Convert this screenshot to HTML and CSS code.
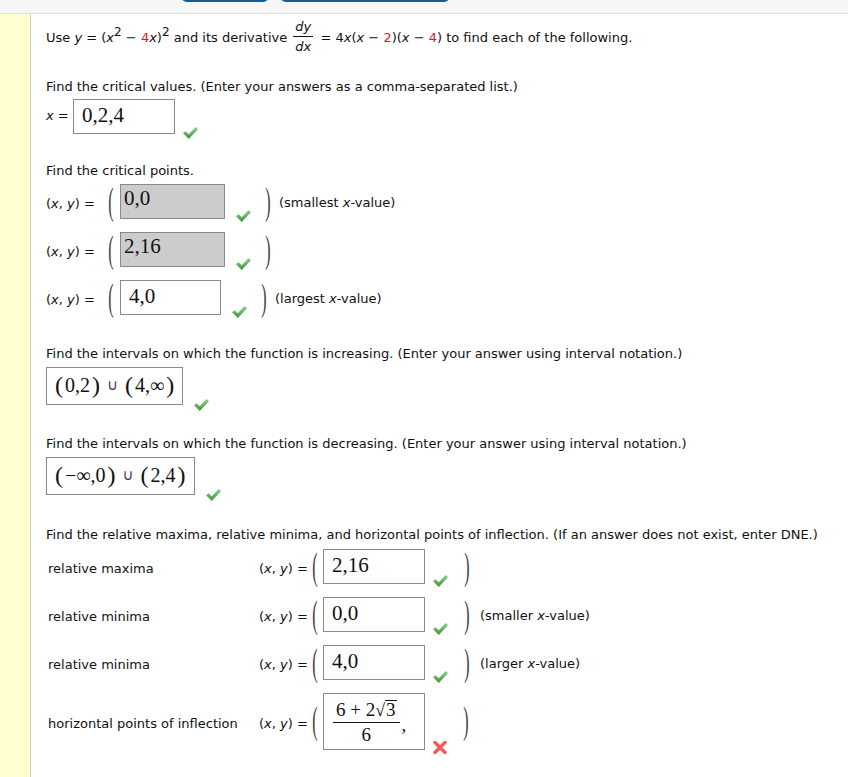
FILE: index.html
```html
<!DOCTYPE html>
<html>
<head>
<meta charset="utf-8">
<link rel="stylesheet" href="styles.css">
</head>
<body>
<div class="topbar">
  <div class="tbtn tbtn1"></div>
  <div class="tbtn tbtn2"></div>
</div>
<div class="page">
  <div class="stripe"></div>
  <div class="content">
    <p class="intro">Use <i>y</i> = (<i>x</i><sup>2</sup> &minus; <span class="red">4</span><i>x</i>)<sup>2</sup> and its derivative
      <span class="frac"><span class="num"><i>dy</i></span><span class="den"><i>dx</i></span></span>
      = 4<i>x</i>(<i>x</i> &minus; <span class="red">2</span>)(<i>x</i> &minus; <span class="red">4</span>) to find each of the following.</p>

    <p class="q q1">Find the critical values. (Enter your answers as a comma-separated list.)</p>
    <div class="xrow">
      <span class="xlabel"><i>x</i> =</span>
      <span class="box white w102"><span class="mv">0,2,4</span></span>
      <span class="mark"><svg class="check" viewBox="0 0 15 12" width="15" height="12"><defs><linearGradient id="g1" x1="0" y1="0" x2="0" y2="1"><stop offset="0" stop-color="#8fd08f"/><stop offset="1" stop-color="#3c963c"/></linearGradient></defs><polygon points="0,6.3 2.6,4.2 5.8,7.2 12.6,0 15,2.2 5.8,12" fill="url(#g1)"/></svg></span>
    </div>

    <p class="q q2">Find the critical points.</p>
    <div class="prow first">
      <span class="plabel">(<i>x</i>, <i>y</i>) =</span>
      <span class="bigp">(</span>
      <span class="box gray w105"><span class="mv tight">0,0</span></span>
      <span class="mark mk1"><svg class="check" viewBox="0 0 15 12" width="15" height="12"><polygon points="0,6.3 2.6,4.2 5.8,7.2 12.6,0 15,2.2 5.8,12" fill="url(#g1)"/></svg></span>
      <span class="bigp rp">)</span>
      <span class="note">(smallest <i>x</i>-value)</span>
    </div>
    <div class="prow">
      <span class="plabel">(<i>x</i>, <i>y</i>) =</span>
      <span class="bigp">(</span>
      <span class="box gray w105"><span class="mv tight">2,16</span></span>
      <span class="mark mk1"><svg class="check" viewBox="0 0 15 12" width="15" height="12"><polygon points="0,6.3 2.6,4.2 5.8,7.2 12.6,0 15,2.2 5.8,12" fill="url(#g1)"/></svg></span>
      <span class="bigp rp">)</span>
    </div>
    <div class="prow">
      <span class="plabel">(<i>x</i>, <i>y</i>) =</span>
      <span class="bigp">(</span>
      <span class="box white w101"><span class="mv">4,0</span></span>
      <span class="mark mk1"><svg class="check" viewBox="0 0 15 12" width="15" height="12"><polygon points="0,6.3 2.6,4.2 5.8,7.2 12.6,0 15,2.2 5.8,12" fill="url(#g1)"/></svg></span>
      <span class="bigp rp">)</span>
      <span class="note">(largest <i>x</i>-value)</span>
    </div>

    <p class="q q3">Find the intervals on which the function is increasing. (Enter your answer using interval notation.)</p>
    <div class="irow">
      <span class="box white ibox"><span class="mv iv"><span class="mp">(</span><span class="d">0,2</span><span class="mp">)</span><span class="cup">&cup;</span><span class="mp">(</span><span class="d">4,&infin;</span><span class="mp">)</span></span></span>
      <span class="mark"><svg class="check" viewBox="0 0 15 12" width="15" height="12"><polygon points="0,6.3 2.6,4.2 5.8,7.2 12.6,0 15,2.2 5.8,12" fill="url(#g1)"/></svg></span>
    </div>

    <p class="q q4">Find the intervals on which the function is decreasing. (Enter your answer using interval notation.)</p>
    <div class="irow">
      <span class="box white ibox"><span class="mv iv"><span class="mp">(</span><span class="d">&minus;&infin;,0</span><span class="mp">)</span><span class="cup">&cup;</span><span class="mp">(</span><span class="d">2,4</span><span class="mp">)</span></span></span>
      <span class="mark"><svg class="check" viewBox="0 0 15 12" width="15" height="12"><polygon points="0,6.3 2.6,4.2 5.8,7.2 12.6,0 15,2.2 5.8,12" fill="url(#g1)"/></svg></span>
    </div>

    <p class="q q5">Find the relative maxima, relative minima, and horizontal points of inflection. (If an answer does not exist, enter DNE.)</p>
    <div class="grid">
      <div class="rrow">
        <span class="rlabel">relative maxima</span>
        <span class="plabel">(<i>x</i>, <i>y</i>) =</span>
        <span class="bigp">(</span>
        <span class="box white w102"><span class="mv">2,16</span></span>
        <span class="mark mk2"><svg class="check" viewBox="0 0 15 12" width="15" height="12"><polygon points="0,6.3 2.6,4.2 5.8,7.2 12.6,0 15,2.2 5.8,12" fill="url(#g1)"/></svg></span>
        <span class="bigp rp">)</span>
      </div>
      <div class="rrow">
        <span class="rlabel">relative minima</span>
        <span class="plabel">(<i>x</i>, <i>y</i>) =</span>
        <span class="bigp">(</span>
        <span class="box white w102"><span class="mv">0,0</span></span>
        <span class="mark mk2"><svg class="check" viewBox="0 0 15 12" width="15" height="12"><polygon points="0,6.3 2.6,4.2 5.8,7.2 12.6,0 15,2.2 5.8,12" fill="url(#g1)"/></svg></span>
        <span class="bigp rp">)</span>
        <span class="note">(smaller <i>x</i>-value)</span>
      </div>
      <div class="rrow">
        <span class="rlabel">relative minima</span>
        <span class="plabel">(<i>x</i>, <i>y</i>) =</span>
        <span class="bigp">(</span>
        <span class="box white w102"><span class="mv">4,0</span></span>
        <span class="mark mk2"><svg class="check" viewBox="0 0 15 12" width="15" height="12"><polygon points="0,6.3 2.6,4.2 5.8,7.2 12.6,0 15,2.2 5.8,12" fill="url(#g1)"/></svg></span>
        <span class="bigp rp">)</span>
        <span class="note">(larger <i>x</i>-value)</span>
      </div>
      <div class="rrow tall">
        <span class="rlabel">horizontal points of inflection</span>
        <span class="plabel">(<i>x</i>, <i>y</i>) =</span>
        <span class="bigp">(</span>
        <span class="box white w102 fbox"><span class="mfrac"><span class="fnum">6 + 2<span class="rad">&radic;</span><span class="radc">3</span></span><span class="fden">6</span></span><span class="comma">,</span></span>
        <span class="mark mk3"><svg class="cross" viewBox="0 0 14 13" width="14" height="13"><path d="M2 1.5 L12 11.5 M12 1.5 L2 11.5" stroke="#f25a5a" stroke-width="3.4" stroke-linecap="round"/></svg></span>
        <span class="bigp rp">)</span>
      </div>
    </div>
  </div>
</div>
</body>
</html>
```
FILE: styles.css
```css
html, body {
  margin: 0;
  padding: 0;
  background: #fff;
}
body {
  font-family: "DejaVu Sans", Verdana, sans-serif;
  font-size: 13px;
  color: #111;
  width: 848px;
  height: 777px;
  overflow: hidden;
}
.topbar {
  height: 13px;
  background: #f6f6f6;
  border-bottom: 1px solid #dedede;
  display: flex;
  align-items: flex-end;
  padding-left: 181px;
  gap: 11px;
  overflow: hidden;
}
.tbtn {
  height: 24px;
  margin-bottom: 11px;
  border: 2px solid #0e5f9a;
  border-radius: 6px;
  box-sizing: border-box;
  background: #fff;
  flex: none;
}
.tbtn1 { width: 88px; }
.tbtn2 { width: 170px; }
.page {
  display: flex;
  height: 763px;
}
.stripe {
  width: 30px;
  flex: none;
  background: #ffffd2;
  border-right: 1px solid #cfcfcf;
}
.content {
  flex: 1;
  padding-left: 15px;
}
p { margin: 0; }
i { font-style: italic; }
.red { color: #f0101e; }
sup { font-size: 12px; line-height: 0; vertical-align: 6px; }
.intro {
  margin-top: 7px;
  line-height: 28px;
  white-space: nowrap;
}
.frac {
  display: inline-flex;
  flex-direction: column;
  align-items: center;
  vertical-align: middle;
  line-height: 14px;
  margin: 0 3px 0 2px;
  position: relative;
  top: -1px;
}
.frac .num { border-bottom: 1px solid #111; padding: 0 2px 2px; }
.frac .den { padding-top: 3px; }
.q { line-height: 16px; white-space: nowrap; }
.q1 { margin-top: 24px; }
.xrow {
  display: flex;
  align-items: flex-start;
  margin-top: 4px;
  height: 40px;
}
.xlabel { margin-top: 9px; width: 27px; flex: none; }
.box {
  box-sizing: border-box;
  height: 35px;
  border: 1px solid #8a8a8a;
  flex: none;
  display: flex;
  align-items: flex-start;
}
.white { background: #fff; padding-left: 8px; }
.gray { background: #cccccc; padding-left: 3px; }
.w102 { width: 102px; }
.w105 { width: 105px; }
.w101 { width: 101px; }
.mv {
  font-family: "Liberation Serif", "DejaVu Serif", serif;
  font-size: 21px;
  line-height: 24px;
  margin-top: 3px;
  color: #111;
}
.mv.tight { margin-top: 1px; }
.mark { display: block; flex: none; }
.xrow .mark { margin-left: 8px; margin-top: 28px; }
.check, .cross { display: block; }
.q2 { margin-top: 24px; }
.prow {
  display: flex;
  align-items: flex-start;
  height: 48px;
}
.prow.first { margin-top: 5px; }
.plabel { margin-top: 12px; width: 60px; flex: none; white-space: nowrap; }
.bigp {
  font-family: "Liberation Serif", "DejaVu Serif", serif;
  font-size: 38px;
  line-height: 34px;
  height: 36px;
  transform: scaleX(0.42);
  width: 8px;
  text-align: center;
  color: #3a3a3a;
  flex: none;
  margin-right: 6px;
}
.prow .mk1 { margin-left: 11px; margin-top: 26px; }
.prow .rp { margin-left: 12px; margin-right: 8px; }
.note { margin-top: 11px; white-space: nowrap; }
.q3 { margin-top: 18px; }
.irow {
  display: flex;
  align-items: flex-start;
  margin-top: 5px;
  height: 44px;
}
.ibox { height: 38px; padding-left: 7px; padding-right: 7px; width: auto; }
.iv { margin-top: 4px; font-size: 20px; display: flex; align-items: center; }
.mp { font-size: 24px; line-height: 26px; margin: 0 1px; }
.d { margin: 0 1px; }
.cup { font-family: "DejaVu Sans", sans-serif; font-size: 15px; color: #553366; margin: 0 6px; }
.irow .mark { margin-left: 11px; margin-top: 32px; }
.q4 { margin-top: 25px; }
.q5 { margin-top: 26px; }
.grid { margin-top: 6px; }
.rrow {
  display: flex;
  align-items: flex-start;
  height: 48px;
  padding-left: 2px;
}
.rrow.tall { height: 70px; }
.rlabel { margin-top: 12px; white-space: nowrap; width: 211px; flex: none; }
.rrow .plabel { width: 51px; }
.rrow .bigp { margin-right: 5px; }
.rrow .mk2 { margin-left: 8px; margin-top: 26px; }
.rrow .mk3 { margin-left: 8px; margin-top: 48px; }
.rrow .rp { margin-left: 14px; margin-right: 10px; }
.rrow.tall .rlabel, .rrow.tall .plabel { margin-top: 23px; }
.rrow.tall .bigp { margin-top: 10px; }
.fbox {
  height: 57px;
  align-items: center;
  padding-left: 9px;
}
.mfrac {
  display: inline-flex;
  flex-direction: column;
  align-items: center;
  font-family: "Liberation Serif", "DejaVu Serif", serif;
  font-size: 19px;
  line-height: 21px;
}
.fnum { border-bottom: 1px solid #111; padding: 0 3px 1px; white-space: nowrap; }
.rad { font-size: 18px; }
.radc { border-top: 1px solid #111; padding: 0 1px; line-height: 18px; display: inline-block; }
.fden { padding-top: 1px; }
.comma { font-family: "Liberation Serif", serif; font-size: 19px; margin-left: 2px; margin-top: 6px; }
```
